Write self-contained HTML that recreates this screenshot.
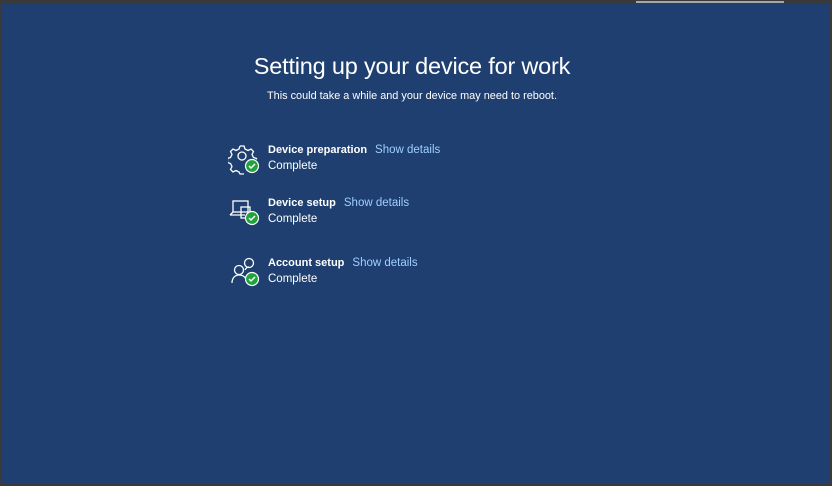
<!DOCTYPE html>
<html><head><style>
html,body{margin:0;padding:0}
body{width:832px;height:486px;background:#3a3a3a;position:relative;overflow:hidden;font-family:"Liberation Sans",sans-serif;color:#fff}
.main{position:absolute;left:2px;top:3px;width:828px;height:481px;background:#1e3f6f}
.bar{position:absolute;left:636px;top:1px;width:148px;height:2px;background:#a8a8a8}
h1{position:absolute;left:0;width:820px;top:50px;margin:0;text-align:center;font-weight:300;font-size:23.5px;letter-spacing:-0.2px}
.sub{position:absolute;left:0;width:820px;top:87px;text-align:center;font-size:10.9px}
.item{position:absolute;left:226px}
.item svg{position:absolute;left:0;top:0}
.t{position:absolute;left:40px;top:1px;font-size:11px;font-weight:bold;white-space:nowrap}
.t span{font-weight:normal;color:#9fd0ff;margin-left:8px;font-size:11.5px}
.c{position:absolute;left:40px;top:17px;font-size:11.5px;white-space:nowrap}
</style></head><body>
<div class="bar"></div>
<div class="main">
<h1>Setting up your device for work</h1>
<div class="sub">This could take a while and your device may need to reboot.</div>

<div class="item" style="top:140px">
<svg width="34" height="34" viewBox="0 0 34 34" fill="none" stroke="#fff" stroke-width="1.3">
<circle cx="14" cy="13" r="4"/>
<path d="M12 3h4l1 3 3 1.5 3-1.5 2.5 2.5-1.5 3 1.5 3 3 1v1M12 3l-1 3-3 1.5-3-1.5-2.5 2.5 1.5 3-1.5 3-3 1v4l3 1 1.5 3-1.5 3 2.5 2.5 3-1.5 3 1.5 1 2h4"/>
<circle cx="24" cy="23" r="6.5" fill="#1fa33a" stroke="#fff" stroke-width="1.2"/>
<path d="M21 23l2 2 4-4" stroke="#fff" stroke-width="1.5"/>
</svg>
<div class="t">Device preparation<span>Show details</span></div>
<div class="c">Complete</div>
</div>

<div class="item" style="top:193px">
<svg width="34" height="34" viewBox="0 0 34 34" fill="none" stroke="#fff" stroke-width="1.3">
<rect x="5" y="5" width="15" height="11"/>
<path d="M2 19h15M2 19l3-3"/>
<rect x="13" y="11" width="9" height="11"/>
<circle cx="24" cy="22" r="6.5" fill="#1fa33a" stroke="#fff" stroke-width="1.2"/>
<path d="M21 22l2 2 4-4" stroke="#fff" stroke-width="1.5"/>
</svg>
<div class="t">Device setup<span>Show details</span></div>
<div class="c">Complete</div>
</div>

<div class="item" style="top:253px">
<svg width="34" height="34" viewBox="0 0 34 34" fill="none" stroke="#fff" stroke-width="1.3">
<circle cx="21" cy="7" r="4.5"/>
<circle cx="11" cy="14" r="4.5"/>
<path d="M4 27c0-5 3-8 7-8s6 2 7 4M17 14c1-2 2-3 4-3"/>
<circle cx="24" cy="23" r="6.5" fill="#1fa33a" stroke="#fff" stroke-width="1.2"/>
<path d="M21 23l2 2 4-4" stroke="#fff" stroke-width="1.5"/>
</svg>
<div class="t">Account setup<span>Show details</span></div>
<div class="c">Complete</div>
</div>
</div>
</body></html>
